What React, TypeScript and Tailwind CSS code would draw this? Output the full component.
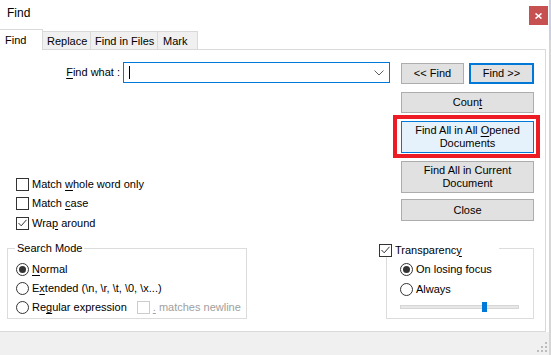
import React from 'react';

const Box = ({ checked, disabled }: { checked?: boolean; disabled?: boolean }) => (
  <span
    className={`w-[13px] h-[13px] border ${
      disabled ? 'border-[#cccccc]' : 'border-[#333333]'
    } bg-white flex items-center justify-center shrink-0`}
  >
    {checked && (
      <svg width="9" height="8" viewBox="0 0 9 8">
        <path d="M0.5 4 L3.2 6.8 L8.5 0.8" stroke="#333333" fill="none" strokeWidth="1" />
      </svg>
    )}
  </span>
);

const Radio = ({ checked }: { checked?: boolean }) => (
  <span className="w-[13px] h-[13px] rounded-full border border-[#333333] bg-white flex items-center justify-center shrink-0">
    {checked && <span className="w-[7px] h-[7px] rounded-full bg-[#333333]" />}
  </span>
);

const U = ({ children }: { children: React.ReactNode }) => (
  <span className="underline underline-offset-2">{children}</span>
);

const btn = 'border border-[#adadad] bg-[#e1e1e1] flex items-center justify-center text-center';

export default function App() {
  return (
    <div className="w-[551px] h-[355px] bg-white flex overflow-hidden whitespace-nowrap text-[11px] text-black font-['Liberation_Sans',Arial,sans-serif]">
      <div className="w-[549px] h-full flex flex-col">
        {/* title bar */}
        <div className="h-[29px] flex items-start justify-between shrink-0">
          <span className="pl-[7px] pt-[6px] text-[12px] leading-[14px]">Find</span>
          <div className="mt-[6px] mr-[1px] w-[19px] h-[19px] bg-[#c75050] flex items-center justify-center">
            <svg width="7" height="6" viewBox="0 0 7 6">
              <path d="M0.5 0.5 L6.5 5.5 M6.5 0.5 L0.5 5.5" stroke="white" strokeWidth="1.6" />
            </svg>
          </div>
        </div>

        {/* tabs */}
        <div className="h-[20px] flex items-end shrink-0">
          <div className="relative z-10 -mb-px h-[21px] w-[43px] bg-white border-t border-r border-[#d9d9d9] pl-[5px] pt-[4px] leading-[13px]">
            Find
          </div>
          <div className="h-[18px] w-[48px] bg-[#f0f0f0] border-t border-r border-[#d9d9d9] pl-[4px] pt-[3px] leading-[13px]">
            Replace
          </div>
          <div className="h-[18px] w-[67px] bg-[#f0f0f0] border-t border-r border-[#d9d9d9] pl-[4px] pt-[3px] leading-[13px]">
            Find in Files
          </div>
          <div className="h-[18px] w-[40px] bg-[#f0f0f0] border-t border-r border-[#d9d9d9] pl-[5px] pt-[3px] leading-[13px]">
            Mark
          </div>
        </div>

        {/* panel */}
        <div className="h-[283px] w-[546px] border-t border-r border-b border-[#d9d9d9] flex flex-col shrink-0">
          <div className="flex pt-[12px]">
            {/* left */}
            <div className="w-[390px] flex flex-col">
              <div className="flex items-center h-[21px]">
                <span className="w-[120px] text-right">
                  <U>F</U>ind what :
                </span>
                <div className="ml-[3px] w-[267px] h-[21px] border border-[#0078d7] flex items-center justify-between">
                  <span className="ml-[5px] w-px h-[13px] bg-black" />
                  <svg className="mr-[5px]" width="10" height="6" viewBox="0 0 10 6">
                    <path d="M0.5 0.5 L5 5 L9.5 0.5" stroke="#606060" fill="none" strokeWidth="1" />
                  </svg>
                </div>
              </div>
              <div className="mt-[91px] pl-[16px] flex flex-col">
                <div className="h-[20px] flex items-center">
                  <Box />
                  <span className="ml-[3px]">
                    Match <U>w</U>hole word only
                  </span>
                </div>
                <div className="h-[19px] flex items-center">
                  <Box />
                  <span className="ml-[3px]">
                    Match <U>c</U>ase
                  </span>
                </div>
                <div className="h-[20px] flex items-center">
                  <Box checked />
                  <span className="ml-[3px]">
                    Wra<U>p</U> around
                  </span>
                </div>
              </div>
            </div>

            {/* right buttons */}
            <div className="ml-[11px] w-[133px] flex flex-col pt-px">
              <div className="flex gap-[5px]">
                <div className={`${btn} w-[63px] h-[21px]`}>&lt;&lt; Find</div>
                <div className="w-[65px] h-[21px] border-2 border-[#0078d7] bg-[#e1e1e1] flex items-center justify-center">
                  Find &gt;&gt;
                </div>
              </div>
              <div className={`${btn} mt-[8px] h-[21px]`}>
                Coun<U>t</U>
              </div>
              <div className="relative mt-[8px] h-[32px]">
                <div className="h-full border border-[#0078d7] bg-[#e5f1fb] flex items-center justify-center text-center leading-[13px]">
                  <span>
                    Find All in All <U>O</U>pened
                    <br />
                    Documents
                  </span>
                </div>
                <div className="absolute -top-[6px] -left-[8px] -right-[6px] -bottom-[5px] border-[4px] border-[#ed1c24]" />
              </div>
              <div className={`${btn} mt-[8px] h-[32px] leading-[13px]`}>
                <span>
                  Find All in Current
                  <br />
                  Document
                </span>
              </div>
              <div className={`${btn} mt-[6px] h-[22px]`}>Close</div>
            </div>
          </div>

          {/* bottom groups */}
          <div className="flex mt-[15px]">
            <div className="relative ml-[7px] w-[240px] h-[71px] border border-[#dcdcdc] pt-[10px] pl-[8px]">
              <span className="absolute -top-[8px] left-[7px] px-[2px] bg-white leading-[14px]">Search Mode</span>
              <div className="h-[20px] flex items-center">
                <Radio checked />
                <span className="ml-[3px]">
                  <U>N</U>ormal
                </span>
              </div>
              <div className="h-[19px] flex items-center">
                <Radio />
                <span className="ml-[3px]">
                  E<U>x</U>tended (\n, \r, \t, \0, \x...)
                </span>
              </div>
              <div className="h-[19px] flex items-center">
                <Radio />
                <span className="ml-[3px] shrink-0">
                  Re<U>g</U>ular expression
                </span>
                <span className="ml-[10px] shrink-0">
                  <Box disabled />
                </span>
                <span className="ml-[3px] shrink-0 text-[#a0a0a0]">
                  <U>.</U> matches newline
                </span>
              </div>
            </div>

            <div className="relative ml-[139px] w-[148px] h-[71px] border border-[#dcdcdc] pt-[10px] pl-[13px]">
              <div className="absolute -top-[6px] -left-[8px] w-[120px] h-[14px] bg-white flex items-center">
                <Box checked />
                <span className="ml-[3px]">
                  Transparenc<U>y</U>
                </span>
              </div>
              <div className="h-[20px] flex items-center">
                <Radio checked />
                <span className="ml-[3px]">On losing focus</span>
              </div>
              <div className="h-[20px] flex items-center">
                <Radio />
                <span className="ml-[3px]">Always</span>
              </div>
              <div className="relative mt-[6px] w-[119px] h-[4px] bg-[#e7e7e7] border border-[#d6d6d6]">
                <span className="absolute -top-[4px] left-[81px] w-[5px] h-[10px] bg-[#0078d7]" />
              </div>
            </div>
          </div>
        </div>

        {/* status bar */}
        <div className="flex-1 bg-[#f0f0f0] flex items-end justify-end">
          <svg className="mb-[2px] mr-px" width="11" height="11" viewBox="0 0 11 11">
            <rect x="8" y="0" width="2" height="2" fill="#bcbcbc" />
            <rect x="4" y="4" width="2" height="2" fill="#bcbcbc" />
            <rect x="8" y="4" width="2" height="2" fill="#bcbcbc" />
            <rect x="0" y="8" width="2" height="2" fill="#bcbcbc" />
            <rect x="4" y="8" width="2" height="2" fill="#bcbcbc" />
            <rect x="8" y="8" width="2" height="2" fill="#bcbcbc" />
          </svg>
        </div>
      </div>
      <div className="w-[2px] h-full flex flex-col">
        <div className="h-[40px] bg-[#cfcfe3]" />
        <div className="flex-1 bg-[#d6d6d6]" />
      </div>
    </div>
  );
}
